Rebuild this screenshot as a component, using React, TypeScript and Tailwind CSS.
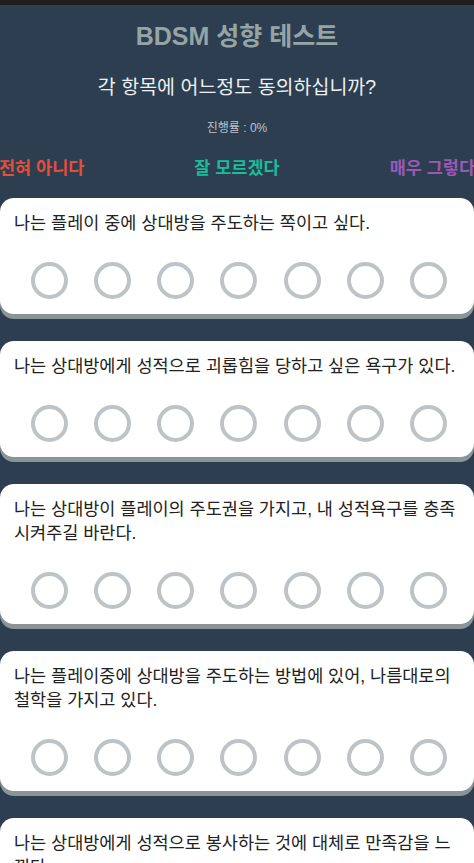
import React from 'react';

const font = { fontFamily: '"Liberation Sans", "Noto Sans CJK KR", sans-serif' };

const questions: string[][] = [
  ['나는 플레이 중에 상대방을 주도하는 쪽이고 싶다.'],
  ['나는 상대방에게 성적으로 괴롭힘을 당하고 싶은 욕구가 있다.'],
  ['나는 상대방이 플레이의 주도권을 가지고, 내 성적욕구를 충족', '시켜주길 바란다.'],
  ['나는 플레이중에 상대방을 주도하는 방법에 있어, 나름대로의', '철학을 가지고 있다.'],
  ['나는 상대방에게 성적으로 봉사하는 것에 대체로 만족감을 느', '낀다.'],
  ['나는 상대방의 몸에 흔적을 남기는 것을 좋아한다.'],
];

const QuestionCard: React.FC<{ lines: string[] }> = ({ lines }) => (
  <div className="bg-white rounded-[14px] shadow-[0_5px_0_#8a9597] pt-[13px] pb-[15px]">
    <p className="px-[14px] text-[17.5px] leading-[24px] text-[#222] whitespace-nowrap">
      {lines.map((l, i) => (
        <React.Fragment key={i}>
          {i > 0 && <br />}
          {l}
        </React.Fragment>
      ))}
    </p>
    <div className="flex justify-between pl-[31px] pr-[27px] mt-[27px]">
      {Array.from({ length: 7 }).map((_, i) => (
        <button
          key={i}
          type="button"
          className="w-[37px] h-[37px] rounded-full border-[4px] border-[#bdc3c7] bg-white"
        />
      ))}
    </div>
  </div>
);

export default function App() {
  return (
    <div className="min-h-screen bg-[#2c3e50] overflow-hidden" style={font}>
      <div className="h-[5px] bg-[#1e1e1e]" />
      <h1 className="mt-[15px] text-center text-[25px] leading-[32px] font-bold text-[#95a5a6]">
        BDSM 성향 테스트
      </h1>
      <p className="mt-[21px] text-center text-[19.5px] leading-[28px] text-[#ecf0f1]">
        각 항목에 어느정도 동의하십니까?
      </p>
      <p className="mt-[19px] text-center text-[12px] leading-[16px] text-[#bdc3c7]">
        진행률 : 0%
      </p>
      <div className="mt-[20px] -mx-[1px] flex justify-between text-[17.5px] leading-[24px] font-bold whitespace-nowrap">
        <span className="text-[#e74c3c]">전혀 아니다</span>
        <span className="text-[#1abc9c]">잘 모르겠다</span>
        <span className="text-[#9b59b6]">매우 그렇다</span>
      </div>
      <div className="mt-[18px] flex flex-col gap-[27px]">
        {questions.map((q, i) => (
          <QuestionCard key={i} lines={q} />
        ))}
      </div>
    </div>
  );
}
